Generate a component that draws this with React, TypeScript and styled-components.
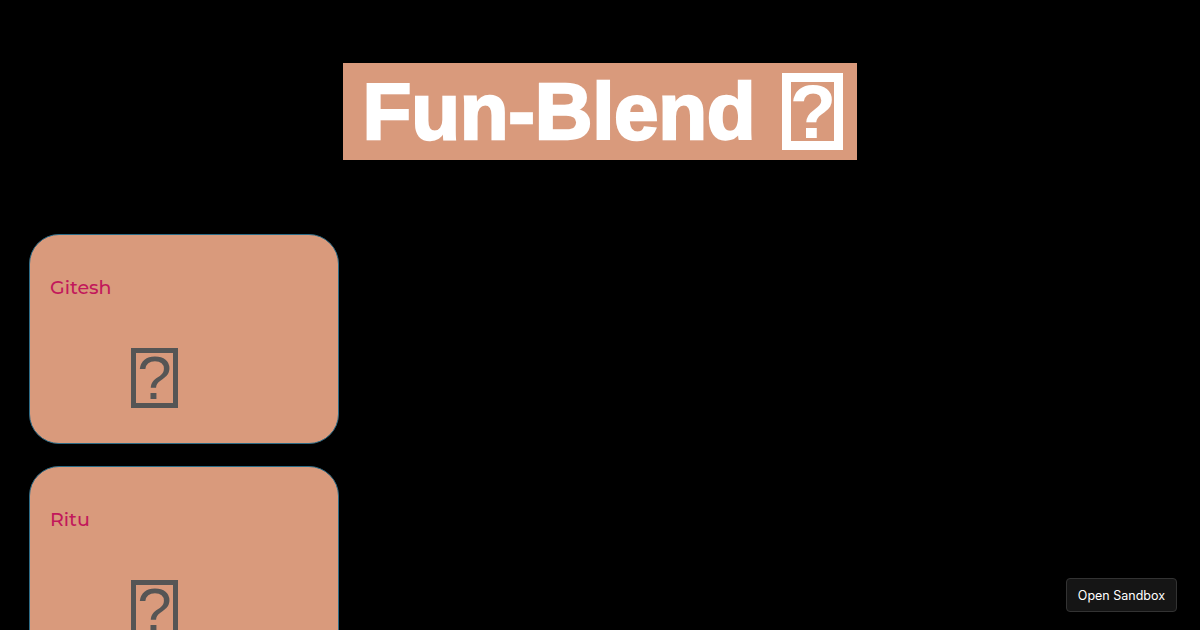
import React from "react";
import styled, { createGlobalStyle } from "styled-components";

const GlobalStyle = createGlobalStyle`
  html, body {
    background: #000;
  }
  body {
    margin: 8px;
    font-family: "Liberation Sans", Arial, sans-serif;
  }
`;

const Header = styled.header`
  text-align: center;
`;

const Title = styled.h1`
  display: inline-flex;
  align-items: center;
  gap: 27px;
  height: 97px;
  margin: 55px 0 54px;
  padding: 0 14px 0 20px;
  background: #d99a7c;
  color: #fff;
  font-family: "Liberation Sans", Arial, sans-serif;
  font-weight: 700;
  font-size: 80px;
  line-height: 97px;
  letter-spacing: -0.3px;
  -webkit-text-stroke: 2.4px #fff;
`;

// the missing-glyph box the emoji falls back to
const Tofu = styled.span<{ $size: "big" | "small" }>`
  display: inline-flex;
  align-items: center;
  justify-content: center;
  box-sizing: border-box;
  width: ${(p) => (p.$size === "big" ? "61px" : "47px")};
  height: ${(p) => (p.$size === "big" ? "77px" : "60px")};
  border: ${(p) => (p.$size === "big" ? "9px solid #fff" : "5px solid #555")};
  color: ${(p) => (p.$size === "big" ? "#fff" : "#555")};
  font-family: "Liberation Sans", Arial, sans-serif;
  font-weight: ${(p) => (p.$size === "big" ? 700 : 400)};
  font-size: ${(p) => (p.$size === "big" ? "76px" : "62px")};
  line-height: 1;
  letter-spacing: 0;
  -webkit-text-stroke: 0;
`;

const CardList = styled.section`
  display: flex;
  flex-direction: column;
  gap: 22px;
  padding: 20px 21px;
`;

const Card = styled.div`
  width: 310px;
  height: 210px;
  box-sizing: border-box;
  background: #d99a7c;
  border: 1px solid #2c6b86;
  border-radius: 30px;
  padding: 41px 20px 0;
`;

const Name = styled.div`
  color: #c2185b;
  font-family: "Montserrat", "Lato", "Noto Sans", sans-serif;
  font-size: 19px;
  font-weight: 500;
  line-height: 24px;
`;

const EmojiRow = styled.div`
  display: flex;
  margin-top: 48px;
  padding-left: 81px;
`;

const SandboxButton = styled.button`
  position: fixed;
  right: 23px;
  bottom: 18px;
  height: 34px;
  padding: 0 11px;
  background: #151515;
  color: #fff;
  border: 1px solid #333;
  border-radius: 4px;
  font-family: "Inter", "Liberation Sans", sans-serif;
  font-size: 12.5px;
  cursor: pointer;
`;

const friends = ["Gitesh", "Ritu"];

export default function App() {
  return (
    <>
      <GlobalStyle />
      <Header>
        <Title>
          <span>Fun-Blend</span>
          <Tofu $size="big">?</Tofu>
        </Title>
      </Header>
      <CardList>
        {friends.map((name) => (
          <Card key={name}>
            <Name>{name}</Name>
            <EmojiRow>
              <Tofu $size="small">?</Tofu>
            </EmojiRow>
          </Card>
        ))}
      </CardList>
      <SandboxButton>Open Sandbox</SandboxButton>
    </>
  );
}
